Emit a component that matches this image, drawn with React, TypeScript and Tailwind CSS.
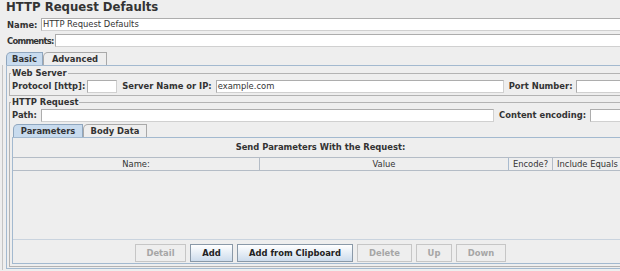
import type { ReactNode } from "react";

const Field = ({ value, className = "" }: { value?: string; className?: string }) => (
  <div
    className={`h-[13px] overflow-hidden whitespace-nowrap border border-[#adadad] border-b-[#d0d0d0] border-r-[#d0d0d0] bg-white pl-[1px] leading-[11px] text-[#333333] ${className}`}
  >
    {value}
  </div>
);

const Tab = ({ label, selected, width }: { label: string; selected?: boolean; width: string }) => (
  <div
    className={`flex h-[13px] items-center justify-center rounded-tl-[5px] border border-b-0 font-bold leading-[10px] ${width} ${
      selected ? "border-[#8fa6be] bg-[#c8dbee]" : "border-[#a9a9a9] bg-[#eeeeee]"
    }`}
  >
    {label}
  </div>
);

const Group = ({ title, children }: { title: string; children: ReactNode }) => (
  <fieldset className="border border-[#b3b3b3] px-[1px]">
    <legend className="h-[10px] px-[1px] font-bold leading-[10px]">{title}</legend>
    {children}
  </fieldset>
);

const Btn = ({ label, enabled, width }: { label: string; enabled?: boolean; width: string }) => (
  <div
    className={`flex h-[18px] items-center justify-center border font-bold leading-[10px] ${width} ${
      enabled
        ? "border-[#8a99a8] bg-gradient-to-b from-[#ffffff] to-[#cddcec] text-[#222222]"
        : "border-[#c6c6c6] bg-[#eeeeee] text-[#a6a6a6]"
    }`}
  >
    {label}
  </div>
);

export default function App() {
  return (
    <div className="h-[271px] w-[620px] overflow-hidden bg-[#eeeeee] font-['DejaVu_Sans',sans-serif] text-[8.4px] text-[#333333]">
      <div className="w-[635px]">
        <div className="h-[17px] pl-[6px] text-[11.7px] font-bold leading-[15px]">HTTP Request Defaults</div>

        <div className="flex h-[15px] items-center pl-[7px]">
          <span className="w-[34px] font-bold leading-[10px]">Name:</span>
          <Field value="HTTP Request Defaults" className="flex-1" />
        </div>
        <div className="mt-[1px] flex h-[15px] items-center pl-[7px]">
          <span className="font-bold leading-[10px] tracking-[-0.75px]">Comments:</span>
          <Field className="ml-[1px] flex-1" />
        </div>

        <div className="flex pl-[6px] pt-[4px]">
          <Tab label="Basic" selected width="w-[37px]" />
          <Tab label="Advanced" width="w-[64px]" />
        </div>

        <div className="ml-[2px] border-l border-[#c4c4c4] pb-[1px] pl-[3px]">
          <div className="border border-[#a3b9cf] px-[2px] pb-[1px] pt-[2px]">
            <Group title="Web Server">
              <div className="mt-[1px] mb-[2px] flex h-[14px] items-center pl-[1px]">
                <span className="font-bold leading-[10px]">Protocol [http]:</span>
                <Field className="ml-[2px] h-[12px] w-[30px]" />
                <span className="ml-[5px] font-bold leading-[10px]">Server Name or IP:</span>
                <Field value="example.com" className="ml-[4px] h-[12px] w-[288px]" />
                <span className="ml-[5px] font-bold leading-[10px]">Port Number:</span>
                <Field className="ml-[4px] h-[12px] flex-1" />
              </div>
            </Group>

            <div className="mt-[1px]">
              <Group title="HTTP Request">
                <div className="mt-[1px] flex h-[14px] items-center pl-[1px]">
                  <span className="w-[29px] font-bold leading-[10px]">Path:</span>
                  <Field className="flex-1" />
                  <span className="ml-[5px] font-bold leading-[10px]">Content encoding:</span>
                  <Field className="ml-[4px] w-[40px]" />
                </div>

                <div className="mx-[1px] mb-[2px] mt-[2px]">
                  <div className="flex pl-[1px]">
                    <Tab label="Parameters" selected width="w-[70px]" />
                    <Tab label="Body Data" width="w-[64px]" />
                  </div>
                  <div className="border border-[#a3b9cf] pb-[1px]">
                    <div className="h-[19px] text-center font-bold leading-[19px]">
                      Send Parameters With the Request:
                    </div>
                    <div className="flex h-[14px] border-y border-[#b4bcc6] leading-[12px]">
                      <div className="w-[247px] border-r border-[#b4bcc6] text-center">Name:</div>
                      <div className="w-[249px] border-r border-[#a9bbcf] text-center">Value</div>
                      <div className="w-[44px] border-r border-[#b4bcc6] text-center">Encode?</div>
                      <div className="flex-1 whitespace-nowrap pl-[4px]">Include Equals</div>
                    </div>
                    <div className="h-[68px]" />
                    <div className="flex justify-center gap-[4px] border-t border-[#c9d3de] pt-[4px]">
                      <Btn label="Detail" width="w-[51px]" />
                      <Btn label="Add" enabled width="w-[43px]" />
                      <Btn label="Add from Clipboard" enabled width="w-[116px]" />
                      <Btn label="Delete" width="w-[55px]" />
                      <Btn label="Up" width="w-[36px]" />
                      <Btn label="Down" width="w-[50px]" />
                    </div>
                  </div>
                </div>
              </Group>
            </div>
          </div>
        </div>
      </div>
    </div>
  );
}
